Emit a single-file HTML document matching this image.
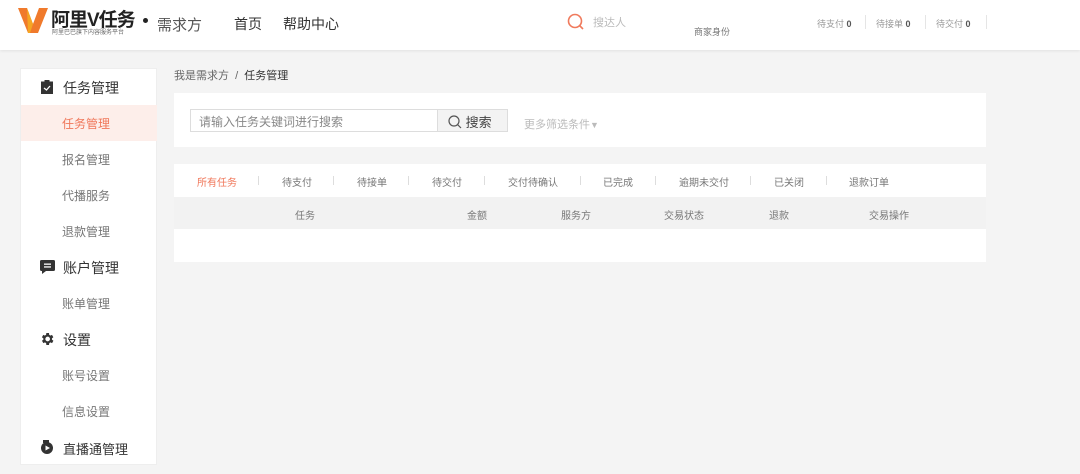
<!DOCTYPE html>
<html><head><meta charset="utf-8"><style>
*{margin:0;padding:0;box-sizing:border-box}
body{width:1080px;height:474px;background:#f4f4f4;font-family:"Liberation Sans","Noto Sans CJK SC",sans-serif;position:relative;overflow:hidden;color:#333}
.a{position:absolute;white-space:nowrap}
.hdr{position:absolute;left:0;top:0;width:1080px;height:50px;background:#fff;box-shadow:0 1px 3px rgba(0,0,0,.08)}
.side{position:absolute;left:20px;top:68px;width:137px;height:397px;background:#fff;border:1px solid #eee}
.grp{position:absolute;left:20px;font-size:14px;color:#333}
.itm{position:absolute;left:41px;font-size:12px;color:#777}
.panel{position:absolute;background:#fff}
.tab{position:absolute;top:174px;font-size:10px;color:#777}
.sep{position:absolute;top:176px;width:1px;height:9px;background:#ddd}
.th{position:absolute;top:207px;font-size:10px;color:#777}
</style></head><body>
<div class="hdr">
 <svg class="a" style="left:18px;top:6px" width="30" height="28" viewBox="0 0 30 28"><path d="M0 2 L9 2 L15 18 L21 2 L30 2 L20 27 L10 27 Z" fill="#f07a2c"/><path d="M9 2 L15 18 L12 27 L10 27Z" fill="#f5a623"/></svg>
 <div class="a" style="left:51px;top:5px;font-size:19px;font-weight:bold;color:#222;letter-spacing:-1px">阿里V任务</div>
 <div class="a" style="left:143px;top:18px;width:5px;height:5px;border-radius:50%;background:#222"></div>
 <div class="a" style="left:52px;top:27px;font-size:6px;color:#666">阿里巴巴旗下内容服务平台</div>
 <div class="a" style="left:157px;top:14px;font-size:15px;color:#555">需求方</div>
 <div class="a" style="left:234px;top:14px;font-size:14px;color:#333">首页</div>
 <div class="a" style="left:283px;top:14px;font-size:14px;color:#333">帮助中心</div>
 <svg class="a" style="left:567px;top:13px" width="18" height="18" viewBox="0 0 18 18"><circle cx="8" cy="8" r="6.5" fill="none" stroke="#f07a5c" stroke-width="1.6"/><path d="M12.5 12.5 L16 16" stroke="#f07a5c" stroke-width="1.6"/></svg>
 <div class="a" style="left:593px;top:14px;font-size:11px;color:#bbb">搜达人</div>
 <div class="a" style="left:694px;top:25px;font-size:9px;color:#777">商家身份</div>
 <div class="a" style="left:817px;top:17px;font-size:9px;color:#999">待支付 <b style="color:#555">0</b></div>
 <div class="a" style="left:865px;top:15px;width:1px;height:14px;background:#e5e5e5"></div>
 <div class="a" style="left:876px;top:17px;font-size:9px;color:#999">待接单 <b style="color:#555">0</b></div>
 <div class="a" style="left:925px;top:15px;width:1px;height:14px;background:#e5e5e5"></div>
 <div class="a" style="left:936px;top:17px;font-size:9px;color:#999">待交付 <b style="color:#555">0</b></div>
 <div class="a" style="left:986px;top:15px;width:1px;height:14px;background:#e5e5e5"></div>
</div>
<div class="side">
 <svg class="a" style="left:20px;top:11px" width="12" height="14" viewBox="0 0 12 14"><rect x="0" y="1.5" width="12" height="12.5" fill="#333"/><rect x="3.5" y="0" width="5" height="3" fill="#333"/><path d="M3 8 L5.5 10 L9 6" stroke="#fff" stroke-width="1.3" fill="none"/></svg>
 <div class="grp" style="left:42px;top:9px">任务管理</div>
 <div class="a" style="left:0;top:36px;width:136px;height:36px;background:#fdeeea"></div>
 <div class="itm" style="top:46px;color:#f0775a">任务管理</div>
 <div class="itm" style="top:82px">报名管理</div>
 <div class="itm" style="top:118px">代播服务</div>
 <div class="itm" style="top:154px">退款管理</div>
 <svg class="a" style="left:19px;top:191px" width="15" height="14" viewBox="0 0 15 14"><rect x="0" y="0" width="15" height="11" rx="1.5" fill="#333"/><path d="M2 11 L2 14 L6 11Z" fill="#333"/><rect x="4" y="3.5" width="7" height="1.3" fill="#fff"/><rect x="4" y="6.3" width="7" height="1.3" fill="#fff"/></svg>
 <div class="grp" style="left:42px;top:189px">账户管理</div>
 <div class="itm" style="top:226px">账单管理</div>
 <svg class="a" style="left:18px;top:262px" width="16" height="16" viewBox="0 0 24 24"><path fill="#333" d="M19.4 13a7.5 7.5 0 000-2l2.1-1.6-2-3.5-2.5 1a7.3 7.3 0 00-1.7-1L15 3h-4l-.4 2.9a7.3 7.3 0 00-1.7 1l-2.5-1-2 3.5L6.6 11a7.5 7.5 0 000 2l-2.1 1.6 2 3.5 2.5-1a7.3 7.3 0 001.7 1L11 21h4l.4-2.9a7.3 7.3 0 001.7-1l2.5 1 2-3.5zM13 15.5a3.5 3.5 0 110-7 3.5 3.5 0 010 7z"/></svg>
 <div class="grp" style="left:42px;top:261px">设置</div>
 <div class="itm" style="top:298px">账号设置</div>
 <div class="itm" style="top:334px">信息设置</div>
 <svg class="a" style="left:19px;top:371px" width="14" height="14" viewBox="0 0 14 14"><circle cx="7" cy="8" r="6" fill="#333"/><rect x="3" y="0" width="6" height="3" fill="#333"/><path d="M5.5 5.5 L10 8 L5.5 10.5Z" fill="#fff"/></svg>
 <div class="grp" style="left:42px;top:370px;font-size:13px">直播通管理</div>
</div>
<div class="a" style="left:174px;top:67px;font-size:11px;color:#666">我是需求方 &nbsp;/&nbsp; <span style="color:#333">任务管理</span></div>
<div class="panel" style="left:174px;top:93px;width:812px;height:54px">
 <div class="a" style="left:16px;top:16px;width:248px;height:23px;border:1px solid #ddd;font-size:12px;color:#888;padding:3px 8px">请输入任务关键词进行搜索</div>
 <div class="a" style="left:263px;top:16px;width:71px;height:23px;border:1px solid #ddd;background:#f3f3f3;font-size:13px;color:#444;padding:2px 0 0 10px"><svg style="vertical-align:-2px" width="14" height="14" viewBox="0 0 14 14"><circle cx="6" cy="6" r="5" fill="none" stroke="#555" stroke-width="1.2"/><path d="M9.5 9.5 L13 13" stroke="#555" stroke-width="1.2"/></svg> 搜索</div>
 <div class="a" style="left:350px;top:23px;font-size:11px;color:#bbb">更多筛选条件<span style="font-size:9px">▼</span></div>
</div>
<div class="panel" style="left:174px;top:164px;width:812px;height:98px"></div>
<div class="a" style="left:174px;top:197px;width:812px;height:32px;background:#f2f2f2"></div>
<div class="tab" style="left:197px;color:#f0775a">所有任务</div><div class="sep" style="left:258px"></div>
<div class="tab" style="left:282px">待支付</div><div class="sep" style="left:333px"></div>
<div class="tab" style="left:357px">待接单</div><div class="sep" style="left:408px"></div>
<div class="tab" style="left:432px">待交付</div><div class="sep" style="left:484px"></div>
<div class="tab" style="left:508px">交付待确认</div><div class="sep" style="left:580px"></div>
<div class="tab" style="left:603px">已完成</div><div class="sep" style="left:655px"></div>
<div class="tab" style="left:679px">逾期未交付</div><div class="sep" style="left:750px"></div>
<div class="tab" style="left:774px">已关闭</div><div class="sep" style="left:826px"></div>
<div class="tab" style="left:849px">退款订单</div>
<div class="th" style="left:295px">任务</div>
<div class="th" style="left:467px">金额</div>
<div class="th" style="left:561px">服务方</div>
<div class="th" style="left:664px">交易状态</div>
<div class="th" style="left:769px">退款</div>
<div class="th" style="left:869px">交易操作</div>
</body></html>
